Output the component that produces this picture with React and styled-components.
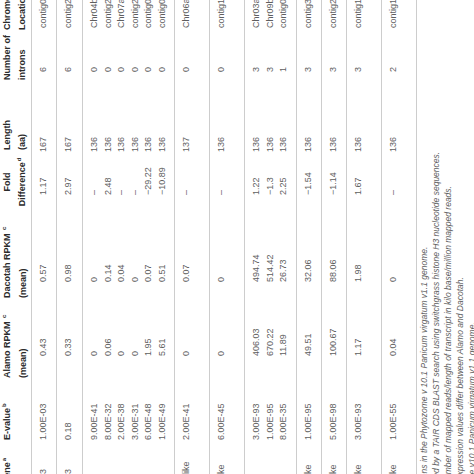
import React from 'react';
import styled, { createGlobalStyle } from 'styled-components';

const GlobalStyle = createGlobalStyle`
  html, body {
    margin: 0;
    padding: 0;
    background: #ffffff;
  }
  body {
    font-family: "Liberation Sans", Arial, Helvetica, sans-serif;
  }
`;

const Viewport = styled.div`
  position: relative;
  width: 474px;
  height: 474px;
  overflow: hidden;
  background: #ffffff;
`;

// the printed table is turned a quarter turn on the page,
// so it is laid out upright here and rotated as a whole
const Page = styled.div`
  position: absolute;
  top: 0;
  left: 0;
  width: 620px;
  height: 474px;
  transform-origin: 0 0;
  transform: translate(0, 474px) rotate(-90deg) translateX(-60px);
`;

const Row = styled.div`
  display: flex;
  box-sizing: border-box;
  min-height: ${(p) => p.$h}px;
  border-bottom: 1px solid #cdcdcd;
`;

const HeadCell = styled.div`
  flex: 0 0 ${(p) => p.$w}px;
  box-sizing: border-box;
  padding: 0 ${(p) => p.$padR || 0}px 0 ${(p) => p.$pad}px;
  text-align: ${(p) => p.$align || 'left'};
  font-size: 9px;
  font-weight: 700;
  line-height: 15px;
  color: #2b2b2b;
  white-space: nowrap;
`;

const Cell = styled.div`
  flex: 0 0 ${(p) => p.$w}px;
  box-sizing: border-box;
  padding: 5px 0 0 ${(p) => p.$pad}px;
  font-size: 9px;
  line-height: 13.5px;
  color: #5e5e5e;
  white-space: nowrap;
`;

const Line = styled.div``;

const Sup = styled.span`
  position: relative;
  top: -0.6em;
  font-size: 6px;
  margin-left: 1px;
`;

const Notes = styled.div`
  padding-top: 2px;
`;

const Note = styled.div`
  font-size: 8.5px;
  font-style: italic;
  line-height: 11px;
  color: #5e5e5e;
  white-space: nowrap;
`;

const columns = [
  { key: 'name', w: 90, hpad: 0, vpad: 4, headAlign: 'right', padR: 14 },
  { key: 'evalue', w: 62, hpad: 4, vpad: 4 },
  { key: 'alamo', w: 80, hpad: 4, vpad: 26 },
  { key: 'dacotah', w: 93, hpad: 4, vpad: 20 },
  { key: 'fold', w: 54, hpad: 0, vpad: 14, headAlign: 'center' },
  { key: 'length', w: 71, hpad: 5, vpad: 3 },
  { key: 'introns', w: 50, hpad: 4, vpad: 12 },
  { key: 'chrom', w: 120, hpad: 4, vpad: 6 },
];

const headers = {
  name: [<>Gene<Sup>a</Sup></>, ''],
  evalue: [<>E-value<Sup>b</Sup></>, ''],
  alamo: [<>Alamo RPKM <Sup>c</Sup></>, '(mean)'],
  dacotah: [<>Dacotah RPKM <Sup>c</Sup></>, '(mean)'],
  fold: ['Fold', <>Difference<Sup>d</Sup></>],
  length: ['Length', '(aa)'],
  introns: ['Number of', 'introns'],
  chrom: ['Chromosome', <>Location<Sup>e</Sup></>],
};

const rows = [
  {
    h: 25,
    name: ['Pavir.J0123 H3'],
    evalue: ['1.00E-03'], alamo: ['0.43'], dacotah: ['0.57'], fold: ['1.17'],
    length: ['167'], introns: ['6'], chrom: ['contig02841'],
  },
  {
    h: 26,
    name: ['Pavir.J2057 H3'],
    evalue: ['0.18'], alamo: ['0.33'], dacotah: ['0.98'], fold: ['2.97'],
    length: ['167'], introns: ['6'], chrom: ['contig26313'],
  },
  {
    h: 92,
    name: ['Pavir.J01 H3'],
    evalue: ['9.00E-41', '8.00E-32', '2.00E-38', '3.00E-31', '6.00E-48', '1.00E-49'],
    alamo: ['0', '0.06', '0', '0', '1.95', '5.61'],
    dacotah: ['0', '0.14', '0.04', '0', '0.07', '0.51'],
    fold: ['–', '2.48', '–', '–', '−29.22', '−10.89'],
    length: ['136', '136', '136', '136', '136', '136'],
    introns: ['0', '0', '0', '0', '0', '0'],
    chrom: ['Chr04b', 'contig2', 'Chr07a', 'contig2', 'contig0', 'contig0'],
  },
  {
    h: 35,
    name: ['Pavir.Fb9 H3-like'],
    evalue: ['2.00E-41'], alamo: ['0'], dacotah: ['0.07'], fold: ['–'],
    length: ['137'], introns: ['0'], chrom: ['Chr06a'],
  },
  {
    h: 35,
    name: ['Pavir.Ib5 H3-like'],
    evalue: ['6.00E-45'], alamo: ['0'], dacotah: ['0'], fold: ['–'],
    length: ['136'], introns: ['0'], chrom: ['contig1'],
  },
  {
    h: 52,
    name: ['Pavir.C03 H3'],
    evalue: ['3.00E-93', '1.00E-95', '8.00E-35'],
    alamo: ['406.03', '670.22', '11.89'],
    dacotah: ['494.74', '514.42', '26.73'],
    fold: ['1.22', '−1.3', '2.25'],
    length: ['136', '136', '136'],
    introns: ['3', '3', '1'],
    chrom: ['Chr03a', 'Chr09b', 'contig0'],
  },
  {
    h: 25,
    name: ['Pavir.Ib3 H3-like'],
    evalue: ['1.00E-95'], alamo: ['49.51'], dacotah: ['32.06'], fold: ['−1.54'],
    length: ['136'], introns: ['3'], chrom: ['contig3'],
  },
  {
    h: 25,
    name: ['Pavir.Ib4 H3-like'],
    evalue: ['5.00E-98'], alamo: ['100.67'], dacotah: ['88.06'], fold: ['−1.14'],
    length: ['136'], introns: ['3'], chrom: ['contig2'],
  },
  {
    h: 35,
    name: ['Pavir.Ib0 H3-like'],
    evalue: ['3.00E-93'], alamo: ['1.17'], dacotah: ['1.98'], fold: ['1.67'],
    length: ['136'], introns: ['3'], chrom: ['contig1'],
  },
  {
    h: 35,
    name: ['Pavir.Ib1 H3-like'],
    evalue: ['1.00E-55'], alamo: ['0.04'], dacotah: ['0'], fold: ['–'],
    length: ['136'], introns: ['2'], chrom: ['contig1'],
  },
];

const notes = [
  ['a', 'IDs and locations in the Phytozome v 10.1 Panicum virgatum v1.1 genome.'],
  ['b', 'Genes identified by a TAIR CDS BLAST search using switchgrass histone H3 nucleotide sequences.'],
  ['c', 'RPKM - the number of mapped reads/length of transcript in kilo base/million mapped reads.'],
  ['d', 'Fold that the expression values differ between Alamo and Dacotah.'],
  ['e', 'See Phytozome v10.1 Panicum virgatum v1.1 genome.'],
];

function App() {
  return (
    <>
      <GlobalStyle />
      <Viewport>
        <Page>
          <Row $h={32}>
            {columns.map((c) => (
              <HeadCell
                key={c.key}
                $w={c.w}
                $pad={c.hpad}
                $padR={c.padR}
                $align={c.headAlign}
              >
                <Line>{headers[c.key][0] || '\u00a0'}</Line>
                <Line>{headers[c.key][1] || '\u00a0'}</Line>
              </HeadCell>
            ))}
          </Row>
          {rows.map((r, i) => (
            <Row key={i} $h={r.h}>
              {columns.map((c) => (
                <Cell key={c.key} $w={c.w} $pad={c.vpad}>
                  {r[c.key].map((v, j) => (
                    <Line key={j}>{v}</Line>
                  ))}
                </Cell>
              ))}
            </Row>
          ))}
          <Notes>
            {notes.map(([mark, text]) => (
              <Note key={mark}>
                <Sup>{mark}</Sup>
                {text}
              </Note>
            ))}
          </Notes>
        </Page>
      </Viewport>
    </>
  );
}

export default App;
